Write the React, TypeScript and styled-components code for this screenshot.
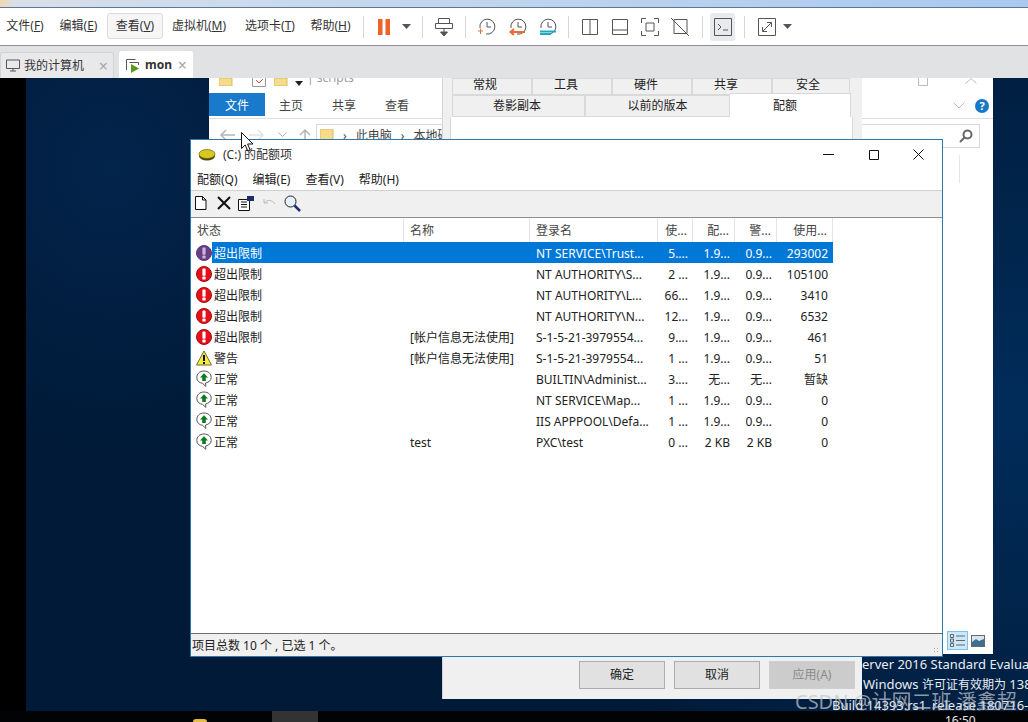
import React from 'react';
import styled, { createGlobalStyle } from 'styled-components';

const UI_FONT = `"Noto Sans", "Noto Sans CJK SC", sans-serif`;

const GlobalStyle = createGlobalStyle`
  html, body { margin: 0; padding: 0; height: 100%; background: #000; overflow: hidden; }
  #root { height: 100%; }
  * { box-sizing: border-box; }
`;

const Page = styled.div`
  height: 722px;
  width: 1028px;
  display: flex;
  flex-direction: column;
  overflow: hidden;
  font: 12px/16px ${UI_FONT};
  color: #222;
`;

const TitleStrip = styled.div`
  height: 8px;
  flex: none;
  background: linear-gradient(90deg, #f0d9ae 0, #d9dfe6 14px, #cfdcec 160px, #a9c9ef 100%);
  border-bottom: 1px solid #5d7895;
`;

const Toolbar = styled.div`
  height: 38px;
  flex: none;
  display: flex;
  align-items: center;
  background: #fff;
  border-bottom: 1px solid #8b8d90;
`;

const MenuItem = styled.span<{ $active?: boolean; $w: number }>`
  width: ${p => p.$w}px;
  height: 26px;
  margin-top: -1px;
  display: flex;
  align-items: center;
  justify-content: center;
  font-size: 12px;
  color: #333;
  border-radius: 3px;
  border: 1px solid ${p => (p.$active ? '#dcdcdc' : 'transparent')};
  background: ${p => (p.$active ? '#f6f6f6' : 'transparent')};
  u { text-underline-offset: 1px; }
`;

const ToolSep = styled.i<{ $l?: number; $r?: number }>`
  width: 1px;
  height: 22px;
  flex: none;
  background: #d6d6d6;
  margin-left: ${p => p.$l ?? 0}px;
  margin-right: ${p => p.$r ?? 0}px;
`;

const ToolIcon = styled.span<{ $w?: number; $pressed?: boolean; $l?: number }>`
  width: ${p => p.$w ?? 30}px;
  height: 28px;
  flex: none;
  margin-left: ${p => p.$l ?? 0}px;
  display: flex;
  align-items: center;
  justify-content: center;
  border-radius: 3px;
  background: ${p => (p.$pressed ? '#e8eaee' : 'transparent')};
`;

const TabStrip = styled.div`
  height: 32px;
  flex: none;
  display: flex;
  align-items: flex-end;
  gap: 5px;
  background: #e1e2e4;
`;

const Tab = styled.div<{ $active?: boolean; $w: number }>`
  width: ${p => p.$w}px;
  height: ${p => (p.$active ? 27 : 26)}px;
  display: flex;
  align-items: center;
  gap: 4px;
  padding: 0 5px;
  background: ${p => (p.$active ? '#fff' : '#e9e9eb')};
  border: 1px solid ${p => (p.$active ? '#fff' : '#d2d3d5')};
  border-bottom: 0;
  border-radius: 3px 3px 0 0;
  color: #333;
  font-weight: ${p => (p.$active ? 700 : 400)};
`;

const TabClose = styled.span`
  margin-left: auto;
  color: #a8a8a8;
  font-size: 16px;
  font-weight: 400;
  line-height: 16px;
`;

const Desktop = styled.div`
  position: relative;
  flex: 1;
  min-height: 0;
  overflow: hidden;
  background:
    linear-gradient(90deg, #000 26px, transparent 26px),
    radial-gradient(ellipse 480px 460px at 1000px 330px, #012c5a 0, transparent 100%),
    radial-gradient(ellipse 240px 280px at 110px 90px, #03244b 0, transparent 100%),
    #001a38;
`;

const Taskbar = styled.div`
  position: absolute;
  left: 0;
  right: 0;
  bottom: 0;
  height: 11px;
  background: #020304;
`;

const TaskTile = styled.div`
  position: absolute;
  left: 272px;
  top: 0;
  width: 46px;
  height: 11px;
  background: #333;
`;

const TaskFolder = styled.div`
  position: absolute;
  left: 193px;
  top: 8px;
  width: 14px;
  height: 3px;
  background: #e2bb45;
  border-radius: 3px 3px 0 0;
`;

const Clock = styled.div`
  position: absolute;
  left: 945px;
  top: 2px;
  color: #e8e8e8;
  font-size: 12px;
`;

const DesktopInfo = styled.div`
  position: absolute;
  left: 0;
  top: 576px;
  color: #e9edf2;
  font-size: 13px;
  line-height: 20px;
  white-space: nowrap;
`;

const InfoLine = styled.div<{ $x: number }>`
  margin-left: ${p => p.$x}px;
  span { font-size: 12px; }
`;

const Watermark = styled.div`
  position: absolute;
  left: 795px;
  top: 612px;
  font-size: 20px;
  line-height: 24px;
  color: rgba(195, 200, 205, 0.72);
  white-space: nowrap;
`;

/* behind the quota window */
const Explorer = styled.div`
  position: absolute;
  left: 209px;
  top: 0;
  width: 784px;
  height: 576px;
  background: #fff;
  display: flex;
  flex-direction: column;
`;

const QuickRow = styled.div`
  height: 15px;
  flex: none;
  display: flex;
  align-items: flex-start;
  overflow: hidden;
  padding-left: 10px;
  gap: 7px;
  color: #9a9a9a;
`;

const ScriptsLabel = styled.span`
  margin-top: -8px;
  margin-left: -3px;
  font-size: 12px;
  color: #9c9c9c;
`;

const Nudge = styled.span<{ $l?: number; $t?: number }>`
  display: inline-flex;
  flex: none;
  margin-left: ${p => p.$l ?? 0}px;
  margin-top: ${p => p.$t ?? 0}px;
`;

const RibbonGlyphs = styled.div`
  margin-left: auto;
  display: flex;
  gap: 37px;
  padding-right: 16px;
`;

const RibbonTabs = styled.div`
  height: 26px;
  flex: none;
  display: flex;
  border-bottom: 1px solid #dcdcdc;
  align-items: flex-start;
`;

const RibbonTab = styled.span<{ $active?: boolean; $w: number }>`
  width: ${p => p.$w}px;
  height: 23px;
  padding-top: 2px;
  display: flex;
  align-items: center;
  justify-content: center;
  color: ${p => (p.$active ? '#fff' : '#444')};
  background: ${p => (p.$active ? '#1979ca' : 'transparent')};
`;

const HelpArea = styled.div`
  margin-left: auto;
  height: 25px;
  display: flex;
  align-items: center;
  gap: 10px;
  padding-right: 4px;
`;

const HelpDot = styled.span`
  width: 14px;
  height: 14px;
  border-radius: 50%;
  background: #1878c8;
  color: #fff;
  font-size: 11px;
  font-weight: 700;
  line-height: 14px;
  text-align: center;
`;

const AddressRow = styled.div`
  display: flex;
  align-items: flex-start;
  padding-top: 5px;
  height: 29px;
  flex: none;
`;

const NavArrows = styled.div`
  width: 107px;
  height: 22px;
  flex: none;
  display: flex;
  align-items: center;
  padding-left: 10px;
  gap: 6px;
`;

const AddressBox = styled.div`
  width: 510px;
  height: 24px;
  flex: none;
  border: 1px solid #d9d9d9;
  display: flex;
  align-items: center;
  gap: 9px;
  padding-left: 3px;
  color: #444;
`;

const SearchBox = styled.div`
  margin-left: 24px;
  width: 130px;
  height: 24px;
  flex: none;
  border: 1px solid #d9d9d9;
  display: flex;
  align-items: center;
  justify-content: flex-end;
  padding-right: 6px;
`;

const ScrollTick = styled.div`
  align-self: flex-end;
  margin: 7px 33px 0 0;
  width: 1px;
  height: 28px;
  background: #e6e6e6;
`;

const ExplorerFooter = styled.div`
  margin-top: auto;
  height: 23px;
  flex: none;
  display: flex;
  justify-content: flex-end;
  align-items: flex-start;
  padding-right: 6px;
`;

const ViewButton = styled.span<{ $on?: boolean }>`
  width: ${p => (p.$on ? 21 : 19)}px;
  height: 19px;
  display: flex;
  align-items: center;
  justify-content: center;
  border: 1px solid ${p => (p.$on ? '#7ec0e8' : 'transparent')};
  background: ${p => (p.$on ? '#cbe8f8' : 'transparent')};
`;

const PropsDialog = styled.div`
  position: absolute;
  left: 442px;
  top: 0;
  width: 420px;
  height: 621px;
  background: #f0f0f0;
  border-left: 1px solid #d5d5d5;
  display: flex;
  flex-direction: column;
`;

const DialogTabRow = styled.div<{ $h: number }>`
  height: ${p => p.$h}px;
  flex: none;
  display: flex;
  align-items: flex-end;
  margin-left: 9px;
`;

const DialogTab = styled.span<{ $w: number; $selected?: boolean; $shift?: number; $top?: number }>`
  width: ${p => p.$w}px;
  height: ${p => (p.$selected ? '24px' : '100%')};
  display: flex;
  align-items: center;
  justify-content: center;
  padding-right: ${p => p.$shift ?? 10}px;
  padding-bottom: ${p => p.$top ?? 0}px;
  color: #222;
  background: ${p => (p.$selected ? '#fff' : '#f0f0f0')};
  border: 1px solid #d9d9d9;
  border-left-width: ${p => (p.$selected ? 0 : 1)}px;
  border-bottom-width: ${p => (p.$selected ? 0 : 1)}px;
`;

const DialogBody = styled.div`
  flex: 1;
  margin: 0 9px 4px 7px;
  background: #fff;
  border: 1px solid #d9d9d9;
  border-top: 0;
`;

const DialogButtons = styled.div`
  height: 38px;
  flex: none;
  display: flex;
  justify-content: flex-end;
  gap: 9px;
  padding-right: 7px;
`;

const DialogButton = styled.button<{ $disabled?: boolean }>`
  width: 86px;
  height: 28px;
  padding: 0;
  border: 1px solid ${p => (p.$disabled ? '#cfcfcf' : '#adadad')};
  background: ${p => (p.$disabled ? '#cccccc' : '#e1e1e1')};
  color: ${p => (p.$disabled ? '#8a8a8a' : '#222')};
  font: inherit;
`;

/* the quota window itself */
const QuotaWindow = styled.div`
  position: absolute;
  left: 190px;
  top: 61px;
  width: 753px;
  height: 518px;
  background: #fff;
  border: 1px solid #2a79b0;
  display: flex;
  flex-direction: column;
`;

const WinTitle = styled.div`
  height: 28px;
  flex: none;
  display: flex;
  align-items: center;
  padding-left: 7px;
  padding-top: 1px;
  gap: 7px;
  color: #333;
`;

const WinControls = styled.div`
  margin-left: auto;
  padding-right: 1px;
  display: flex;
  align-items: center;
`;

const WinControl = styled.span`
  width: 45px;
  height: 26px;
  display: flex;
  align-items: center;
  justify-content: center;
`;

const WinMenu = styled.div`
  height: 22px;
  flex: none;
  display: flex;
  align-items: center;
  padding: 2px 0 0 6px;
  gap: 15px;
  color: #222;
  span { white-space: nowrap; }
`;

const WinTools = styled.div`
  height: 28px;
  flex: none;
  display: flex;
  align-items: center;
  padding-bottom: 2px;
  background: #f0f0f0;
  border-top: 1px solid #d0d0d0;
  border-bottom: 1px solid #8e8e8e;
`;

const WinToolGroup = styled.div`
  display: flex;
  margin-left: -2px;
`;

const WinTool = styled.span`
  width: 23px;
  height: 24px;
  display: flex;
  align-items: center;
  justify-content: center;
`;

const QuotaList = styled.div`
  flex: 1;
  min-height: 0;
  background: #fff;
  border-bottom: 1px solid #6e6e6e;
`;

const COLS = '213px 126px 128px 35px 42px 42px 56px';

const ListHeader = styled.div`
  display: grid;
  grid-template-columns: ${COLS};
  width: fit-content;
  height: 24px;
`;

const HeadCell = styled.div<{ $num?: boolean }>`
  display: flex;
  align-items: center;
  justify-content: ${p => (p.$num ? 'flex-end' : 'flex-start')};
  padding: 2px 5px 0 6px;
  border-right: 1px solid #e5e5e5;
  color: #444;
  white-space: nowrap;
`;

const ListRow = styled.div<{ $selected?: boolean }>`
  display: grid;
  grid-template-columns: ${COLS};
  width: fit-content;
  height: 21px;
  color: ${p => (p.$selected ? '#fff' : '#222')};
`;

const StatusCell = styled.div`
  display: flex;
  align-items: stretch;
  padding-left: 5px;
`;

const StatusIconBox = styled.span`
  width: 16px;
  flex: none;
  display: flex;
  align-items: center;
`;

const StatusLabel = styled.span<{ $selected?: boolean }>`
  flex: 1;
  display: flex;
  align-items: center;
  padding: 2px 0 0 2px;
  background: ${p => (p.$selected ? '#0078d7' : 'transparent')};
`;

const DataCell = styled.div<{ $num?: boolean; $selected?: boolean }>`
  display: flex;
  align-items: center;
  justify-content: ${p => (p.$num ? 'flex-end' : 'flex-start')};
  padding: 2px 5px 0 6px;
  white-space: nowrap;
  overflow: hidden;
  background: ${p => (p.$selected ? '#0078d7' : 'transparent')};
`;

const StatusBar = styled.div`
  height: 22px;
  flex: none;
  display: flex;
  align-items: center;
  padding: 2px 0 0 1px;
  background: #f0f0f0;
  color: #222;
  position: relative;
`;

const Grip = styled.span`
  position: absolute;
  right: 2px;
  bottom: 2px;
  width: 7px;
  height: 7px;
  background-image: radial-gradient(#a8a8a8 1px, transparent 1px);
  background-size: 3px 3px;
`;

const CursorMark = styled.svg`
  position: absolute;
  left: 241px;
  top: 54px;
`;

type Kind = 'error' | 'errorSel' | 'warn' | 'ok';

const StatusIcon = ({ kind }: { kind: Kind }) => {
  if (kind === 'warn') {
    return (
      <svg width="16" height="16" viewBox="0 0 16 16">
        <path d="M8 1 L15.5 15 H.5 Z" fill="#f6ee3c" stroke="#6d6d3a" strokeWidth="1" strokeLinejoin="round" />
        <rect x="7" y="5" width="2" height="6" fill="#111" />
        <rect x="7" y="12" width="2" height="2" fill="#111" />
      </svg>
    );
  }
  if (kind === 'ok') {
    return (
      <svg width="16" height="17" viewBox="0 0 16 17">
        <path d="M8 1 C3.6 1 .8 3.8 .8 7.5 C.8 10.8 3.4 13 6.5 13.3 L9.8 16.4 L9.6 13 C13 12.2 15.2 10.3 15.2 7.5 C15.2 3.8 12.4 1 8 1 Z" fill="#fff" stroke="#555" strokeWidth="1" />
        <path d="M8 3.2 L12 7.4 H9.8 V11 H6.2 V7.4 H4 Z" fill="#0d7a1e" />
      </svg>
    );
  }
  const isRed = kind === 'error';
  return (
    <svg width="16" height="16" viewBox="0 0 16 16">
      <circle cx="8" cy="8" r="7.5" fill={isRed ? '#e5101a' : '#6a3d85'} stroke={isRed ? '#a60c12' : '#4e3b7c'} />
      <rect x="6.4" y="2.6" width="3.2" height="7.2" rx="0.8" fill={isRed ? '#fff' : '#c9b9d6'} />
      <rect x="6.4" y="10.6" width="3.2" height="3" rx="0.6" fill={isRed ? '#fff' : '#c9b9d6'} />
    </svg>
  );
};

const FolderGlyph = ({ h = 14 }: { h?: number }) => (
  <svg width="14" height={h} viewBox={`0 0 14 ${h}`}>
    <rect x="0" y="0" width="13" height={h} fill="#f6dc8a" stroke="#d9bd62" />
  </svg>
);

const SnapshotClock = ({ color, kind }: { color: string; kind: 'plus' | 'left' | 'wrench' }) => (
  <svg width="22" height="22" viewBox="0 0 22 22" fill="none">
    <path d="M5 12 A7.5 7.5 0 1 1 11 18" stroke="#555" />
    <path d="M12 6 V11 H16" stroke="#555" />
    {kind === 'plus' && <path d="M3 15 H8 M5.5 12.5 V18" stroke={color} />}
    {kind === 'left' && <path d="M19 16 H5 M8 13 L4.5 16 L8 19" stroke={color} strokeWidth="2" />}
    {kind === 'wrench' && <path d="M4 15.5 H20 M4 18 H15" stroke={color} strokeWidth="2" />}
  </svg>
);

const Caret = () => (
  <svg width="9" height="5" viewBox="0 0 9 5"><path d="M0 0h9L4.5 5z" fill="#555" /></svg>
);

const rows: { kind: Kind; status: string; name: string; login: string; used: string; quota: string; warn: string; pct: string }[] = [
  { kind: 'errorSel', status: '超出限制', name: '', login: 'NT SERVICE\\Trust...', used: '5....', quota: '1.9...', warn: '0.9...', pct: '293002' },
  { kind: 'error', status: '超出限制', name: '', login: 'NT AUTHORITY\\S...', used: '2 ...', quota: '1.9...', warn: '0.9...', pct: '105100' },
  { kind: 'error', status: '超出限制', name: '', login: 'NT AUTHORITY\\L...', used: '66...', quota: '1.9...', warn: '0.9...', pct: '3410' },
  { kind: 'error', status: '超出限制', name: '', login: 'NT AUTHORITY\\N...', used: '12...', quota: '1.9...', warn: '0.9...', pct: '6532' },
  { kind: 'error', status: '超出限制', name: '[帐户信息无法使用]', login: 'S-1-5-21-3979554...', used: '9....', quota: '1.9...', warn: '0.9...', pct: '461' },
  { kind: 'warn', status: '警告', name: '[帐户信息无法使用]', login: 'S-1-5-21-3979554...', used: '1 ...', quota: '1.9...', warn: '0.9...', pct: '51' },
  { kind: 'ok', status: '正常', name: '', login: 'BUILTIN\\Administ...', used: '3....', quota: '无...', warn: '无...', pct: '暂缺' },
  { kind: 'ok', status: '正常', name: '', login: 'NT SERVICE\\Map...', used: '1 ...', quota: '1.9...', warn: '0.9...', pct: '0' },
  { kind: 'ok', status: '正常', name: '', login: 'IIS APPPOOL\\Defa...', used: '1 ...', quota: '1.9...', warn: '0.9...', pct: '0' },
  { kind: 'ok', status: '正常', name: 'test', login: 'PXC\\test', used: '0 ...', quota: '2 KB', warn: '2 KB', pct: '0' },
];

export default function App() {
  return (
    <Page>
      <GlobalStyle />
      <TitleStrip />
      <Toolbar>
        <MenuItem $w={50}>文件(<u>F</u>)</MenuItem>
        <MenuItem $w={57}>编辑(<u>E</u>)</MenuItem>
        <MenuItem $w={56} $active>查看(<u>V</u>)</MenuItem>
        <MenuItem $w={72}>虚拟机(<u>M</u>)</MenuItem>
        <MenuItem $w={70}>选项卡(<u>T</u>)</MenuItem>
        <MenuItem $w={51}>帮助(<u>H</u>)</MenuItem>
        <ToolSep $l={7} />
        <ToolIcon $w={36} $l={2}>
          <svg width="14" height="16" viewBox="0 0 14 16"><path d="M1 0h4.5v16H1zM8.5 0H13v16H8.5z" fill="#ef622c" /></svg>
        </ToolIcon>
        <ToolIcon $w={9}><Caret /></ToolIcon>
        <ToolSep $l={11} />
        <ToolIcon $w={42}>
          <svg width="20" height="20" viewBox="0 0 20 20" fill="none" stroke="#555"><path d="M4.5 1.5h11v5h-11zM1.5 6.5h17v5h-17zM10 11.5v5" /><path d="M6.5 15h7L10 19z" fill="#555" /></svg>
        </ToolIcon>
        <ToolSep />
        <ToolIcon $w={40}><SnapshotClock color="#e8743a" kind="plus" /></ToolIcon>
        <ToolIcon $w={22}><SnapshotClock color="#ef6a2c" kind="left" /></ToolIcon>
        <ToolIcon $w={38}><SnapshotClock color="#1ea9c4" kind="wrench" /></ToolIcon>
        <ToolSep $l={2} />
        <ToolIcon $w={42}>
          <svg width="16" height="16" viewBox="0 0 16 16" fill="none" stroke="#555"><path d="M.5.5h15v15H.5zM8 .5v15" /></svg>
        </ToolIcon>
        <ToolIcon $w={18}>
          <svg width="16" height="16" viewBox="0 0 16 16" fill="none" stroke="#555"><path d="M.5.5h15v15H.5zM.5 11h15" /></svg>
        </ToolIcon>
        <ToolIcon $w={42}>
          <svg width="18" height="18" viewBox="0 0 18 18" fill="none" stroke="#555"><path d="M.5 5V.5H5M13 .5h4.5V5M17.5 13v4.5H13M5 17.5H.5V13M5 5h8v8H5z" /></svg>
        </ToolIcon>
        <ToolIcon $w={18}>
          <svg width="18" height="18" viewBox="0 0 18 18" fill="none" stroke="#555"><path d="M3 1.500h13v14H3zM0 0l18 18" /></svg>
        </ToolIcon>
        <ToolSep $l={13} $r={7} />
        <ToolIcon $w={25} $pressed>
          <svg width="18" height="18" viewBox="0 0 18 18" fill="none" stroke="#555"><path d="M.5.5h17v17H.5zM4 6l3 3-3 3M9 12h5" /></svg>
        </ToolIcon>
        <ToolSep $l={9} $r={9} />
        <ToolIcon $w={26}>
          <svg width="18" height="18" viewBox="0 0 18 18" fill="none" stroke="#555"><path d="M.5.5h17v17H.5zM5 13l8-8M9 4.5h4.5V9M4.500 9v4.500H9" /></svg>
        </ToolIcon>
        <ToolIcon $w={14}><Caret /></ToolIcon>
      </Toolbar>
      <TabStrip>
        <Tab $w={114}>
          <svg width="14" height="13" viewBox="0 0 14 13" fill="none" stroke="#555"><path d="M.5 1h13v8.500H.5zM4 12h6M7 9.500V12" /></svg>
          我的计算机
          <TabClose>×</TabClose>
        </Tab>
        <Tab $w={74} $active>
          <svg width="16" height="16" viewBox="0 0 16 16" fill="none"><path d="M1.500 13V2.500h9M4.500 5.500h9V8" stroke="#555" /><path d="M6 7l8 4.500-8 4.500z" fill="#5a9a1e" /></svg>
          mon
          <TabClose>×</TabClose>
        </Tab>
      </TabStrip>
      <Desktop>
        <DesktopInfo>
          <InfoLine $x={796}>Windows Server 2016 Standard Evaluation</InfoLine>
          <InfoLine $x={863}>Windows <span>许可证有效期为</span> 138 <span>天</span></InfoLine>
          <InfoLine $x={832}>Build 14393.rs1_release.180716-1647</InfoLine>
        </DesktopInfo>
        <Explorer>
          <QuickRow>
            <FolderGlyph h={8} />
            <Nudge $l={12}>
              <svg width="14" height="9" viewBox="0 0 14 9" fill="none"><path d="M.5 0v8.500h13V0" stroke="#999" /><path d="M4 2l3 3 4-4" stroke="#d9534f" /></svg>
            </Nudge>
            <Nudge $l={1}><FolderGlyph h={8} /></Nudge>
            <Nudge $t={3}>
              <svg width="8" height="5" viewBox="0 0 8 5"><path d="M0 0h8L4 5z" fill="#222" /></svg>
            </Nudge>
            <ScriptsLabel>| scripts</ScriptsLabel>
            <RibbonGlyphs>
              <svg width="10" height="8" viewBox="0 0 10 8" fill="none"><path d="M.5 0v7.500h9V0" stroke="#bbb" /></svg>
              <svg width="12" height="6" viewBox="0 0 12 6" fill="none"><path d="M.5 5.500L6 .5l5.500 5" stroke="#bbb" /></svg>
            </RibbonGlyphs>
          </QuickRow>
          <RibbonTabs>
            <RibbonTab $w={56} $active>文件</RibbonTab>
            <RibbonTab $w={52}>主页</RibbonTab>
            <RibbonTab $w={54}>共享</RibbonTab>
            <RibbonTab $w={52}>查看</RibbonTab>
            <HelpArea>
              <svg width="12" height="7" viewBox="0 0 12 7" fill="none"><path d="M.5.5L6 6l5.500-5.500" stroke="#bbb" /></svg>
              <HelpDot>?</HelpDot>
            </HelpArea>
          </RibbonTabs>
          <AddressRow>
            <NavArrows>
              <svg width="16" height="12" viewBox="0 0 16 12" fill="none" stroke="#b5b5b5" strokeWidth="1.500"><path d="M16 6H2M7 1L2 6l5 5" /></svg>
              <Nudge $l={8}>
                <svg width="16" height="12" viewBox="0 0 16 12" fill="none" stroke="#e2e2e2" strokeWidth="1.500"><path d="M0 6h14M9 1l5 5-5 5" /></svg>
              </Nudge>
              <Nudge $l={7}>
                <svg width="9" height="6" viewBox="0 0 9 6" fill="none" stroke="#b5b5b5"><path d="M.5.5l4 4 4-4" /></svg>
              </Nudge>
              <Nudge $l={6}>
                <svg width="12" height="14" viewBox="0 0 12 14" fill="none" stroke="#b5b5b5" strokeWidth="1.500"><path d="M6 14V2M1 7l5-5 5 5" /></svg>
              </Nudge>
            </NavArrows>
            <AddressBox>
              <FolderGlyph h={14} />
              <span>›</span>此电脑<span>›</span>本地磁盘 (C:)
            </AddressBox>
            <SearchBox>
              <svg width="14" height="14" viewBox="0 0 14 14" fill="none" stroke="#666" strokeWidth="2"><circle cx="8.500" cy="5.500" r="4" /><path d="M5.500 8.500L1 13" /></svg>
            </SearchBox>
          </AddressRow>
          <ScrollTick />
          <ExplorerFooter>
            <ViewButton $on>
              <svg width="15" height="13" viewBox="0 0 15 13" fill="none" stroke="#666"><path d="M.5.500h3v3h-3zM.5 5h3v3h-3zM.5 9.500h3v3h-3zM6 2h9M6 6.500h9M6 11h9" /></svg>
            </ViewButton>
            <ViewButton>
              <svg width="14" height="12" viewBox="0 0 14 12"><rect x=".5" y=".5" width="13" height="11" fill="#d8e6ee" stroke="#667" /><path d="M1 7l4-3 3 2 5-2v7H1z" fill="#3d6f8f" /></svg>
            </ViewButton>
          </ExplorerFooter>
        </Explorer>
        <PropsDialog>
          <DialogTabRow $h={17}>
            <DialogTab $w={80} $shift={14} $top={3}>常规</DialogTab>
            <DialogTab $w={80} $shift={12} $top={3}>工具</DialogTab>
            <DialogTab $w={80} $shift={12} $top={3}>硬件</DialogTab>
            <DialogTab $w={80} $shift={12} $top={3}>共享</DialogTab>
            <DialogTab $w={78} $shift={6} $top={3}>安全</DialogTab>
          </DialogTabRow>
          <DialogTabRow $h={22}>
            <DialogTab $w={133} $shift={3}>卷影副本</DialogTab>
            <DialogTab $w={145} $shift={0}>以前的版本</DialogTab>
            <DialogTab $w={121} $selected>配额</DialogTab>
          </DialogTabRow>
          <DialogBody />
          <DialogButtons>
            <DialogButton>确定</DialogButton>
            <DialogButton>取消</DialogButton>
            <DialogButton $disabled>应用(A)</DialogButton>
          </DialogButtons>
        </PropsDialog>
        <QuotaWindow>
          <WinTitle>
            <svg width="18" height="12" viewBox="0 0 18 12">
              <ellipse cx="9" cy="7" rx="8" ry="4.500" fill="#4f4a14" />
              <ellipse cx="9" cy="5" rx="8" ry="4.500" fill="#d9c820" stroke="#5a5510" strokeWidth=".6" />
            </svg>
            (C:) 的配额项
            <WinControls>
              <WinControl>
                <svg width="11" height="1" viewBox="0 0 11 1"><rect width="11" height="1" fill="#111" /></svg>
              </WinControl>
              <WinControl>
                <svg width="10" height="10" viewBox="0 0 10 10" fill="none"><path d="M.5.500h9v9h-9z" stroke="#111" /></svg>
              </WinControl>
              <WinControl>
                <svg width="11" height="11" viewBox="0 0 11 11" fill="none"><path d="M.5.500l10 10M10.500.500l-10 10" stroke="#111" /></svg>
              </WinControl>
            </WinControls>
          </WinTitle>
          <WinMenu>
            <span>配额(Q)</span>
            <span>编辑(E)</span>
            <span>查看(V)</span>
            <span>帮助(H)</span>
          </WinMenu>
          <WinTools>
            <WinToolGroup>
              <WinTool>
                <svg width="13" height="14" viewBox="0 0 13 14" fill="#fff" stroke="#111"><path d="M1.500.500h7l3.500 3.500v9.500H1.500zM8.500.500V4H12" /></svg>
              </WinTool>
              <WinTool>
                <svg width="14" height="14" viewBox="0 0 14 14" fill="none" stroke="#111" strokeWidth="2"><path d="M1 1l12 12M13 1L1 13" /></svg>
              </WinTool>
              <WinTool>
                <svg width="17" height="15" viewBox="0 0 17 15"><path d="M.5 3.500h11v11H.5z" fill="#fff" stroke="#111" /><path d="M3 6h6M3 8.500h6M3 11h6" stroke="#111" /><path d="M9 0h7v5H9z" fill="#1d2f6a" /></svg>
              </WinTool>
              <WinTool>
                <svg width="13" height="11" viewBox="0 0 13 11" fill="none" stroke="#b9b9b9"><path d="M1 1v4h4M1.500 5C4 1.500 9 1.500 12 6" /></svg>
              </WinTool>
              <WinTool>
                <svg width="17" height="17" viewBox="0 0 17 17" fill="none"><circle cx="6.500" cy="6.500" r="5.500" fill="#e6f2fb" stroke="#222" /><path d="M10.500 10.500L16 16" stroke="#1c2f7a" strokeWidth="2.500" /></svg>
              </WinTool>
            </WinToolGroup>
          </WinTools>
          <QuotaList>
            <ListHeader>
              <HeadCell>状态</HeadCell>
              <HeadCell>名称</HeadCell>
              <HeadCell>登录名</HeadCell>
              <HeadCell $num>使...</HeadCell>
              <HeadCell $num>配...</HeadCell>
              <HeadCell $num>警...</HeadCell>
              <HeadCell $num>使用...</HeadCell>
            </ListHeader>
            {rows.map((row, i) => {
              const sel = i === 0;
              return (
                <ListRow key={i} $selected={sel}>
                  <StatusCell>
                    <StatusIconBox><StatusIcon kind={row.kind} /></StatusIconBox>
                    <StatusLabel $selected={sel}>{row.status}</StatusLabel>
                  </StatusCell>
                  <DataCell $selected={sel}>{row.name}</DataCell>
                  <DataCell $selected={sel}>{row.login}</DataCell>
                  <DataCell $num $selected={sel}>{row.used}</DataCell>
                  <DataCell $num $selected={sel}>{row.quota}</DataCell>
                  <DataCell $num $selected={sel}>{row.warn}</DataCell>
                  <DataCell $num $selected={sel}>{row.pct}</DataCell>
                </ListRow>
              );
            })}
          </QuotaList>
          <StatusBar>
            项目总数 10 个 , 已选 1 个。
            <Grip />
          </StatusBar>
        </QuotaWindow>
        <CursorMark width="13" height="20" viewBox="0 0 13 20">
          <path d="M.5.500V16.500L4.200 13l2.600 6 2.400-1-2.600-6H12z" fill="#fff" stroke="#111" />
        </CursorMark>
        <Watermark>CSDN @计网二班 潘鑫超</Watermark>
        <Taskbar>
          <TaskFolder />
          <TaskTile />
          <Clock>16:50</Clock>
        </Taskbar>
      </Desktop>
    </Page>
  );
}
